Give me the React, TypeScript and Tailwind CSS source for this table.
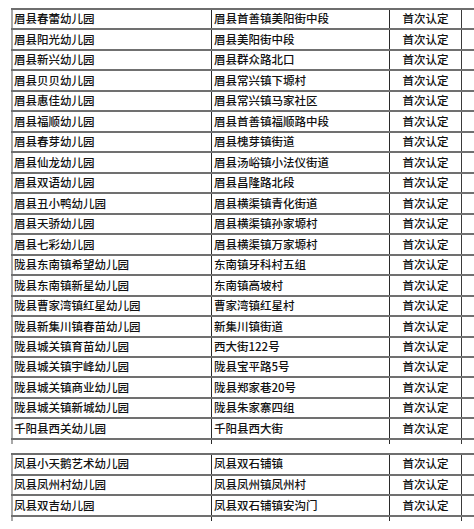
const groupA: [string, string][] = [
  ["眉县春蕾幼儿园", "眉县首善镇美阳街中段"],
  ["眉县阳光幼儿园", "眉县美阳街中段"],
  ["眉县新兴幼儿园", "眉县群众路北口"],
  ["眉县贝贝幼儿园", "眉县常兴镇下塬村"],
  ["眉县惠佳幼儿园", "眉县常兴镇马家社区"],
  ["眉县福顺幼儿园", "眉县首善镇福顺路中段"],
  ["眉县春芽幼儿园", "眉县槐芽镇街道"],
  ["眉县仙龙幼儿园", "眉县汤峪镇小法仪街道"],
  ["眉县双语幼儿园", "眉县昌隆路北段"],
  ["眉县丑小鸭幼儿园", "眉县横渠镇青化街道"],
  ["眉县天骄幼儿园", "眉县横渠镇孙家塬村"],
  ["眉县七彩幼儿园", "眉县横渠镇万家塬村"],
  ["陇县东南镇希望幼儿园", "东南镇牙科村五组"],
  ["陇县东南镇新星幼儿园", "东南镇高坡村"],
  ["陇县曹家湾镇红星幼儿园", "曹家湾镇红星村"],
  ["陇县新集川镇春苗幼儿园", "新集川镇街道"],
  ["陇县城关镇育苗幼儿园", "西大街122号"],
  ["陇县城关镇宇峰幼儿园", "陇县宝平路5号"],
  ["陇县城关镇商业幼儿园", "陇县郑家巷20号"],
  ["陇县城关镇新城幼儿园", "陇县朱家寨四组"],
  ["千阳县西关幼儿园", "千阳县西大街"],
];

const groupB: [string, string][] = [
  ["凤县小天鹅艺术幼儿园", "凤县双石铺镇"],
  ["凤县凤州村幼儿园", "凤县凤州镇凤州村"],
  ["凤县双吉幼儿园", "凤县双石铺镇安沟门"],
];

// vertical lines poke out a few px under each block
function Tail() {
  return (
    <div className="grid grid-cols-[200px_178px_73px] h-[4px]">
      <div className="border-l-2 border-[#a8a8a8]" />
      <div className="border-l-[1.5px] border-[#2a2a2a]" />
      <div className="border-l-[1.5px] border-[#2a2a2a] border-r-[1.5px] border-r-[#3a3a3a]" />
    </div>
  );
}

function Table({ rows, rowH }: { rows: [string, string][]; rowH: string }) {
  return (
    <div>
      <div className="border-t-2 border-[#6e6e6e]">
        {rows.map(([name, addr], i) => (
          <div
            key={i}
            className={`grid grid-cols-[200px_178px_73px] border-b-2 border-[#707070] ${rowH}`}
          >
            <div className="border-l-2 border-[#a8a8a8] pl-[1px] flex items-center whitespace-nowrap">
              {name}
            </div>
            <div className="border-l-[1.5px] border-[#2a2a2a] pl-[2px] flex items-center whitespace-nowrap">
              {addr}
            </div>
            <div className="border-l-[1.5px] border-[#2a2a2a] border-r-[1.5px] border-r-[#3a3a3a] flex items-center justify-center whitespace-nowrap">
              首次认定
            </div>
          </div>
        ))}
      </div>
      <Tail />
    </div>
  );
}

export default function App() {
  return (
    <div
      className="w-[474px] h-[529px] bg-white text-[#111] text-[11.5px] font-medium leading-none overflow-hidden"
      style={{ fontFamily: '"Noto Sans CJK SC", "Noto Sans", sans-serif' }}
    >
      <div className="pl-[11px] pt-[8px]">
        <Table rows={groupA} rowH="h-[20.48px]" />
        <div className="h-[9px]" />
        <Table rows={groupB} rowH="h-[20.7px]" />
      </div>
    </div>
  );
}
